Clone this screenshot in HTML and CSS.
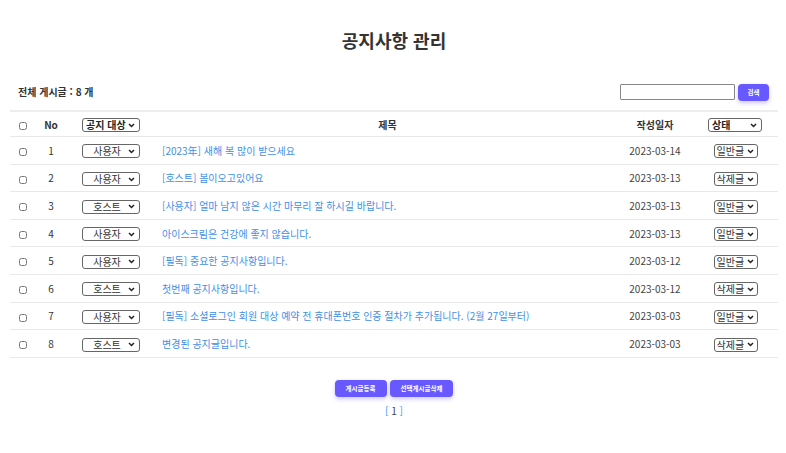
FILE: index.html
```html
<!DOCTYPE html>
<html lang="ko">
<head>
  <meta charset="UTF-8">
  <title>공지사항 관리</title>
  <link rel="stylesheet" href="styles.css">
</head>
<body>
<div class="board">
  <h2>공지사항 관리</h2>

  <div class="topbar">
    <p class="total">전체 게시글 : 8 개</p>
    <div class="search">
      <input type="text" class="search-input">
      <button class="btn">검색</button>
    </div>
  </div>

  <table>
    <colgroup>
      <col class="c-chk">
      <col class="c-no">
      <col class="c-target">
      <col>
      <col class="c-date">
      <col class="c-state">
    </colgroup>
    <thead>
      <tr>
        <th><input type="checkbox" class="chk"></th>
        <th>No</th>
        <th>
          <select class="sel sel-head">
            <option>공지 대상</option>
          </select>
        </th>
        <th>제목</th>
        <th>작성일자</th>
        <th>
          <select class="sel sel-state-head">
            <option>상태</option>
          </select>
        </th>
      </tr>
    </thead>
    <tbody id="noticeRows"></tbody>
  </table>

  <div class="bottom-buttons">
    <button class="btn">게시글등록</button>
    <button class="btn">선택게시글삭제</button>
  </div>
  <p class="paging"><span class="br">[</span> 1 <span class="br">]</span></p>
</div>

<script>
const notices = [
  { no: 1, target: '사용자', title: '[2023年] 새해 복 많이 받으세요', date: '2023-03-14', state: '일반글' },
  { no: 2, target: '사용자', title: '[호스트] 봄이오고있어요', date: '2023-03-13', state: '삭제글' },
  { no: 3, target: '호스트', title: '[사용자] 얼마 남지 않은 시간 마무리 잘 하시길 바랍니다.', date: '2023-03-13', state: '일반글' },
  { no: 4, target: '사용자', title: '아이스크림은 건강에 좋지 않습니다.', date: '2023-03-13', state: '일반글' },
  { no: 5, target: '사용자', title: '[필독] 중요한 공지사항입니다.', date: '2023-03-12', state: '일반글' },
  { no: 6, target: '호스트', title: '첫번째 공지사항입니다.', date: '2023-03-12', state: '삭제글' },
  { no: 7, target: '사용자', title: '[필독] 소셜로그인 회원 대상 예약 전 휴대폰번호 인증 절차가 추가됩니다. (2월 27일부터)', date: '2023-03-03', state: '일반글' },
  { no: 8, target: '호스트', title: '변경된 공지글입니다.', date: '2023-03-03', state: '삭제글' }
];

const tbody = document.getElementById('noticeRows');
notices.forEach(n => {
  const tr = document.createElement('tr');
  tr.innerHTML = `
    <td><input type="checkbox" class="chk"></td>
    <td>${n.no}</td>
    <td><select class="sel sel-target"><option>${n.target}</option></select></td>
    <td class="title"><a href="#">${n.title}</a></td>
    <td class="date">${n.date}</td>
    <td><select class="sel sel-state"><option>${n.state}</option></select></td>
  `;
  tbody.appendChild(tr);
});
</script>
</body>
</html>
```

FILE: styles.css
```css
body {
  margin: 0;
  padding: 0;
  font-family: 'Noto Sans CJK KR', 'Noto Sans', sans-serif;
  font-size: 10px;
  color: #333;
  background: #fff;
}
.board {
  padding: 0 8px 0 10px;
}
h2 {
  margin: 26px 0 0;
  text-align: center;
  font-size: 18px;
  line-height: 28px;
  color: #333;
}
.topbar {
  display: flex;
  justify-content: space-between;
  align-items: center;
  margin-top: 20px;
  padding: 0 9px 0 8px;
  height: 36px;
}
.total {
  margin: 0 0 2px;
  font-size: 10px;
  font-weight: bold;
  color: #333;
}
.search {
  display: flex;
  align-items: flex-start;
  gap: 3px;
}
.search-input {
  width: 115px;
  height: 16px;
  box-sizing: border-box;
  border: 1px solid #888;
  border-radius: 1px;
  padding: 0 3px;
}
.btn {
  background: #6759ff;
  color: #fff;
  border: none;
  border-radius: 4px;
  font-family: inherit;
  font-size: 6.5px;
  font-weight: bold;
  height: 17px;
  padding: 0 11px;
  box-shadow: 0 2px 4px rgba(103,89,255,0.35);
  cursor: pointer;
}
.search .btn {
  width: 31px;
  padding: 0;
}
table {
  width: 100%;
  border-collapse: collapse;
  table-layout: fixed;
  border-top: 2px solid #eee;
}
.c-chk { width: 25px; }
.c-no { width: 32px; }
.c-target { width: 88px; }
.c-date { width: 70px; }
.c-state { width: 88px; }
th, td {
  border-bottom: 1px solid #e8e8e8;
  height: 26.6px;
  padding: 0;
  text-align: center;
  font-size: 10px;
}
th {
  height: 24px;
  font-weight: bold;
  color: #333;
}
td.title {
  text-align: left;
  padding-left: 7px;
  white-space: nowrap;
}
td.title a {
  color: #3f8fe8;
  text-decoration: none;
}
td.date {
  color: #444;
}
.chk {
  width: 8px;
  height: 8px;
  margin: 0;
  vertical-align: middle;
}
.sel {
  appearance: none;
  -webkit-appearance: none;
  box-sizing: border-box;
  height: 14px;
  border: 1px solid #666;
  border-radius: 3px;
  background: #fff url("data:image/svg+xml,%3Csvg xmlns='http://www.w3.org/2000/svg' width='8' height='6' viewBox='0 0 8 6'%3E%3Cpath d='M1 1.2 L4 4.2 L7 1.2' fill='none' stroke='%23222' stroke-width='1.8'/%3E%3C/svg%3E") no-repeat right 4px center;
  background-size: 7px 5px;
  font-family: inherit;
  font-size: 10px;
  line-height: 12px;
  color: #333;
  padding: 0 12px 0 3px;
  vertical-align: middle;
}
th .sel {
  font-weight: bold;
  color: #222;
}
.sel-head, .sel-target {
  width: 58px;
}
.sel-target {
  text-align: center;
  text-align-last: center;
  padding-left: 4px;
}
.sel-state {
  width: 44px;
  margin-left: 3px;
  padding: 0 11px 0 2px;
  background-position: right 3px center;
}
.sel-state-head {
  width: 54px;
  margin-left: 2px;
}
.bottom-buttons {
  display: flex;
  justify-content: center;
  gap: 3px;
  margin-top: 22px;
}
.paging {
  margin: 6px 0 0;
  text-align: center;
  font-size: 10px;
  color: #444;
}
.paging .br {
  color: #3f8fe8;
}
```
